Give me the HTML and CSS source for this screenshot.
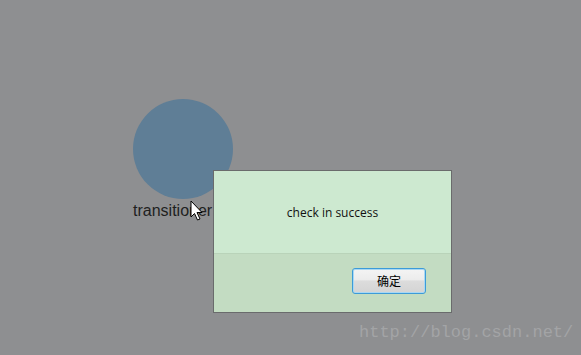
FILE: index.html
```html
<!DOCTYPE html>
<html>
<head>
<meta charset="utf-8">
<link rel="stylesheet" href="styles.css">
</head>
<body>
<div class="stage">
  <div class="node">
    <div class="circle"></div>
    <div class="label">transitioner</div>
  </div>
</div>
<div class="dialog">
  <div class="dialog-body">check in success</div>
  <div class="dialog-foot">
    <button class="btn">确定</button>
  </div>
</div>
<svg class="cursor" width="14" height="22" viewBox="0 0 14 22">
  <path d="M1 1 L1 17 L4.5 13.5 L7.5 20 L10 19 L7 12.5 L12 12.5 Z" fill="#fff" stroke="#000" stroke-width="1" stroke-linejoin="miter"/>
</svg>
<div class="watermark">http://blog.csdn.net/</div>
</body>
</html>
```
FILE: styles.css
```css
html, body {
  margin: 0;
  padding: 0;
  width: 581px;
  height: 355px;
  overflow: hidden;
  background: #8e8f91;
}
.stage {
  padding: 99px 0 0 133px;
}
.node {
  display: flex;
  flex-direction: column;
  align-items: flex-start;
}
.circle {
  width: 100px;
  height: 100px;
  border-radius: 50%;
  background: #5f7e96;
}
.label {
  margin-top: 3px;
  font-family: "Liberation Sans", Arial, sans-serif;
  font-size: 16px;
  line-height: 18px;
  color: #1f1f1f;
}
.dialog {
  position: absolute;
  left: 213px;
  top: 170px;
  width: 237px;
  height: 141px;
  border: 1px solid #6a6b6c;
  display: flex;
  flex-direction: column;
  background: #c3dcc2;
}
.dialog-body {
  height: 83px;
  background: #cde9d0;
  border-bottom: 1px solid #b9d3b9;
  display: flex;
  align-items: center;
  justify-content: center;
  font-family: "Open Sans", "Noto Sans", sans-serif;
  font-size: 12px;
  color: #111;
  padding-top: 1px;
  box-sizing: border-box;
}
.dialog-foot {
  flex: 1;
  display: flex;
  justify-content: flex-end;
  align-items: flex-start;
  padding: 14px 25px 0 0;
}
.btn {
  width: 74px;
  height: 26px;
  margin: 0;
  padding: 0;
  border: 1px solid #3d9bd8;
  border-radius: 3px;
  box-shadow: inset 0 0 0 1px #a9d8f3;
  background: linear-gradient(#f4f4f4 0%, #ececec 45%, #dcdcdc 50%, #d4d4d4 100%);
  font-family: "Noto Sans CJK SC", sans-serif;
  font-size: 12px;
  color: #000;
  line-height: 24px;
}
.cursor {
  position: absolute;
  left: 190px;
  top: 200px;
}
.watermark {
  position: absolute;
  left: 359px;
  top: 322px;
  font-family: "Liberation Mono", "Courier New", monospace;
  font-size: 17px;
  line-height: 22px;
  color: #a3a4a6;
  white-space: nowrap;
}
```
